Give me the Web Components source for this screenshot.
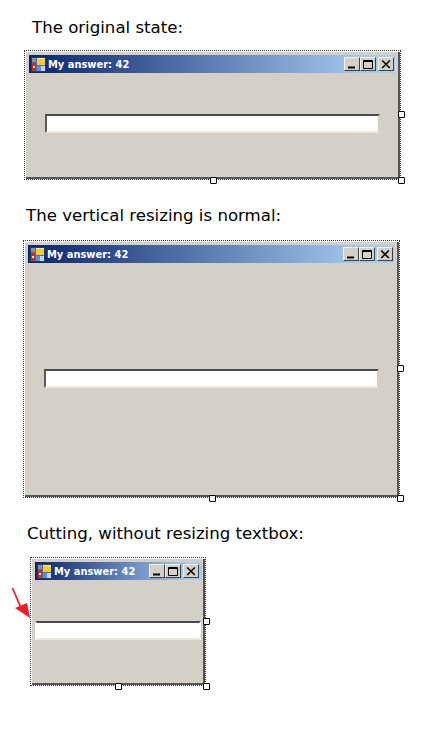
<!DOCTYPE html>
<html>
<head>
<meta charset="utf-8">
<title>Form resizing</title>
<style>
  html, body { margin: 0; padding: 0; background: #fff; }
  body { width: 428px; height: 730px; overflow: hidden; }
</style>
</head>
<body>
<shot-page>
  <shot-caption style="--left:32px; --top:18px">The original state:</shot-caption>
  <design-frame style="--left:24px; --top:12px; --width:377px; --height:130px; --gap:41px; --box-left:16px; --box-right:15px">My answer: 42</design-frame>
  <shot-caption style="--left:26px; --top:26px">The vertical resizing is normal:</shot-caption>
  <design-frame style="--left:23px; --top:14px; --width:377px; --height:258px; --gap:106px; --box-left:16px; --box-right:15px">My answer: 42</design-frame>
  <shot-caption style="--left:27px; --top:26px">Cutting, without resizing textbox:</shot-caption>
  <design-frame cut style="--left:30px; --top:13px; --width:176px; --height:129px; --gap:41px; --box-left:0px; --box-right:1px">My answer: 42</design-frame>
</shot-page>
<script>
class ShotPage extends HTMLElement {
  constructor() {
    super();
    this.attachShadow({mode: "open"});
    this.shadowRoot.innerHTML = `
      <style>
        :host { display: flex; flex-direction: column; align-items: flex-start; width: 428px; height: 730px; }
      </style>
      <slot></slot>
    `;
  }
}

class ShotCaption extends HTMLElement {
  constructor() {
    super();
    this.attachShadow({mode: "open"});
    this.shadowRoot.innerHTML = `
      <style>
        :host {
          display: block;
          margin: var(--top) 0 0 var(--left);
          font: 16.6px/20px "DejaVu Sans", sans-serif;
          color: #000;
          white-space: nowrap;
        }
      </style>
      <slot></slot>
    `;
  }
}

class CaptionButton extends HTMLElement {
  constructor() {
    super();
    this.attachShadow({mode: "open"});
    const kind = this.getAttribute("kind");
    const glyphs = {
      min: '<rect x="3" y="8.5" width="7" height="2" fill="#000"/>',
      max: '<path d="M2.5 2.5h9v8h-9z M2.5 3.5h9" fill="none" stroke="#000"/>',
      close: '<path d="M3.2 2.5l7.6 7.5M10.8 2.5l-7.6 7.5" fill="none" stroke="#000" stroke-width="1.6"/>'
    };
    this.shadowRoot.innerHTML = `
      <style>
        :host {
          display: block;
          width: 14px;
          height: 12px;
          background: #d4d0c8;
          border: 1px solid;
          border-color: #f4f2ee #404040 #404040 #f4f2ee;
        }
        svg { display: block; width: 14px; height: 12px; }
      </style>
      <svg viewBox="0 0 14 12">${glyphs[kind]}</svg>
    `;
  }
}

class DesignFrame extends HTMLElement {
  constructor() {
    super();
    this.attachShadow({mode: "open"});
    const cut = this.hasAttribute("cut");
    this.shadowRoot.innerHTML = `
      <style>
        :host {
          display: block;
          position: relative;
          box-sizing: border-box;
          width: var(--width);
          height: var(--height);
          margin: var(--top) 0 0 var(--left);
          padding: 1px 0 0 1px;
          border: 1px dotted #333;
        }
        .form {
          box-sizing: border-box;
          height: 100%;
          background: #d4d0c8;
          padding: 3px 3px 0 3px;
          border-right: 2px solid #555;
          border-bottom: 2px solid #555;
          display: flex;
          flex-direction: column;
        }
        :host([cut]) .form { padding-right: 1px; }
        .title {
          flex: none;
          height: 18px;
          display: flex;
          align-items: center;
          gap: 2px;
          padding: 0 1px 0 2px;
          background: linear-gradient(90deg, #0a246a, #a6caf0 92%);
          color: #fff;
          font: bold 11px "DejaVu Sans Condensed", "DejaVu Sans", sans-serif;
          font-stretch: condensed;
          white-space: nowrap;
        }
        :host([cut]) .title { padding-right: 3px; }
        .title svg { flex: none; width: 15px; height: 15px; }
        .title .text { flex: 1; }
        .buttons { display: flex; }
        .buttons caption-button[kind="close"] { margin-left: 2px; }
        .box {
          flex: none;
          box-sizing: border-box;
          height: 19px;
          margin: var(--gap) var(--box-right) 0 var(--box-left);
          background: #fff;
          border: 2px solid;
          border-color: #4a4a4a #d4d0c8 #ece9d8 #5a5a5a;
        }
        :host([cut]) .box { border-left-color: #fff; border-right-color: #fff; }
        .handle {
          position: absolute;
          box-sizing: border-box;
          width: 7px;
          height: 7px;
          background: #fff;
          border: 1px solid #000;
          border-radius: 1px;
        }
        .right { right: -5px; top: 50%; margin-top: -4px; }
        .bottom { bottom: -5px; left: 50%; margin-left: -3px; }
        .corner { right: -5px; bottom: -5px; }
        .arrow { position: absolute; left: -19px; top: 29px; width: 20px; height: 34px; }
      </style>
      <div class="form">
        <div class="title">
          <svg viewBox="0 0 15 15">
            <rect x="0.5" y="0.5" width="14" height="14" fill="#5a6a90" stroke="#2a3a66"/>
            <rect x="1" y="1" width="4" height="4" fill="#8a8fa0"/>
            <rect x="6" y="1" width="8" height="7" fill="#f6c83c"/>
            <rect x="6" y="1" width="8" height="1" fill="#fbe9a0"/>
            <rect x="1" y="6" width="4" height="8" fill="#b8352a"/>
            <rect x="2" y="9" width="2" height="2" fill="#e8e0d0"/>
            <rect x="6" y="9" width="4" height="5" fill="#5b8fdc"/>
            <rect x="10" y="9" width="4" height="5" fill="#c9d3e6"/>
          </svg>
          <span class="text"><slot></slot></span>
          <div class="buttons">
            <caption-button kind="min"></caption-button>
            <caption-button kind="max"></caption-button>
            <caption-button kind="close"></caption-button>
          </div>
        </div>
        <div class="box"></div>
      </div>
      <span class="handle right"></span>
      <span class="handle bottom"></span>
      <span class="handle corner"></span>
      ${cut ? `<svg class="arrow" viewBox="0 0 20 34">
        <path d="M0.5 1L9 21" stroke="#e8202e" stroke-width="1.8" fill="none"/>
        <path d="M18 31L15 16L3 21z" fill="#e8202e"/>
      </svg>` : ""}
    `;
  }
}

customElements.define("shot-page", ShotPage);
customElements.define("shot-caption", ShotCaption);
customElements.define("caption-button", CaptionButton);
customElements.define("design-frame", DesignFrame);
</script>
</body>
</html>
